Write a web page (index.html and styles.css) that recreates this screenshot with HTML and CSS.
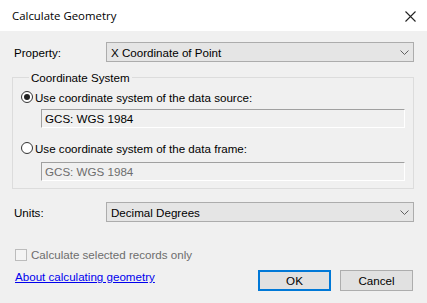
FILE: index.html
```html
<!DOCTYPE html>
<html lang="en">
<head>
    <meta charset="UTF-8">
    <title>Calculate Geometry</title>
    <link rel="stylesheet" href="styles.css">
</head>
<body>
    <div class="dialog">
        <div class="titlebar">
            <span class="title">Calculate Geometry</span>
            <svg class="close" width="11" height="11" viewBox="0 0 11 11">
                <path d="M0.5 0.5 L10.5 10.5 M10.5 0.5 L0.5 10.5" stroke="#222" stroke-width="1.1" fill="none"/>
            </svg>
        </div>

        <div class="content">
            <div class="row row-property">
                <span class="label">Property:</span>
                <div class="select">
                    <span>X Coordinate of Point</span>
                    <svg class="chevron" width="9" height="5" viewBox="0 0 9 5"><path d="M0.5 0.5 L4.5 4.5 L8.5 0.5" stroke="#606060" fill="none"/></svg>
                </div>
            </div>

            <fieldset class="group">
                <legend>Coordinate System</legend>
                <div class="option">
                    <span class="radio checked"></span>
                    <span>Use coordinate system of the data source:</span>
                </div>
                <div class="textbox">GCS: WGS 1984</div>
                <div class="option option-second">
                    <span class="radio"></span>
                    <span>Use coordinate system of the data frame:</span>
                </div>
                <div class="textbox disabled">GCS: WGS 1984</div>
            </fieldset>

            <div class="row row-units">
                <span class="label">Units:</span>
                <div class="select">
                    <span>Decimal Degrees</span>
                    <svg class="chevron" width="9" height="5" viewBox="0 0 9 5"><path d="M0.5 0.5 L4.5 4.5 L8.5 0.5" stroke="#606060" fill="none"/></svg>
                </div>
            </div>

            <div class="check-row">
                <span class="checkbox"></span>
                <span>Calculate selected records only</span>
            </div>

            <div class="footer">
                <a href="#" class="help">About calculating geometry</a>
                <div class="buttons">
                    <button class="btn default">OK</button>
                    <button class="btn">Cancel</button>
                </div>
            </div>
        </div>
    </div>
</body>
</html>
```

FILE: styles.css
```css
body{
    margin: 0;
    background: #f0f0f0;
    font-family: "Liberation Sans", Arial, sans-serif;
    font-size: 11.6px;
    color: #000;
}
.dialog{
    width: 427px; height: 303px;
    background: #f0f0f0;
    overflow: hidden;
}
.titlebar{
    height: 31px;
    background: #fff;
    display: flex; align-items: center; justify-content: space-between;
    padding: 0 11px 0 12px;
}
.title{
    font-family: "Open Sans", sans-serif;
    font-size: 11.4px;
    margin-top: -1px;
}
.close{ margin-top: 1px; }

.content{
    padding: 11px 13px 0 12px;
}
.row{
    display: flex; align-items: center;
    height: 20px;
}
.label{
    width: 92px;
    padding-left: 2px;
}
.select{
    flex: 1;
    height: 18px;
    border: 1px solid #acacac;
    background: #e5e5e5;
    display: flex; align-items: center; justify-content: space-between;
    padding: 0 4px 0 4px;
}
.chevron{ margin-top: 1px; }

.group{
    margin: 9px 0 0 0;
    padding: 6px 8px 9px 8px;
    border: 1px solid #dcdcdc;
    height: 118px;
    box-sizing: border-box;
    min-width: 0;
}
.group legend{
    padding: 0 2px;
    margin-left: 8px;
}
.option{
    display: flex; align-items: center;
    height: 14px;
}
.option-second{ margin-top: 13px; }
.radio{
    border: 1px solid #333;
    border-radius: 50%;
    background: #fff;
    margin-right: 2px;
    position: relative;
    box-sizing: border-box;
    width: 12px; height: 12px;
}
.radio.checked::after{
    content: "";
    position: absolute;
    left: 2px; top: 2px;
    width: 6px; height: 6px;
    border-radius: 50%;
    background: #222;
}
.textbox{
    margin: 5px 0 0 20px;
    height: 19px;
    box-sizing: border-box;
    border: 1px solid #a0a0a0;
    border-right-color: #fff;
    border-bottom-color: #fff;
    padding: 2px 3px;
    line-height: 13px;
}
.textbox.disabled{
    color: #6d6d6d;
    margin-top: 7px;
}

.row-units{ margin-top: 13px; }

.check-row{
    display: flex; align-items: center;
    margin-top: 26px;
    padding-left: 3px;
    color: #6d6d6d;
}
.checkbox{
    width: 12px; height: 12px;
    box-sizing: border-box;
    border: 1px solid #bcbcbc;
    background: #f4f4f4;
    margin-right: 4px;
}
.footer{
    display: flex; justify-content: space-between; align-items: flex-start;
    margin-top: 6px;
}
.help{
    color: #0000ee;
    padding-left: 3px;
    margin-top: 3px;
}
.buttons{
    display: flex; gap: 9px;
    margin-top: 3px;
    margin-right: 1px;
}
.btn{
    width: 73px; height: 21px;
    font: inherit;
    background: #e1e1e1;
    border: 1px solid #adadad;
    padding: 0;
}
.btn.default{
    border: 2px solid #0078d7;
}
```
